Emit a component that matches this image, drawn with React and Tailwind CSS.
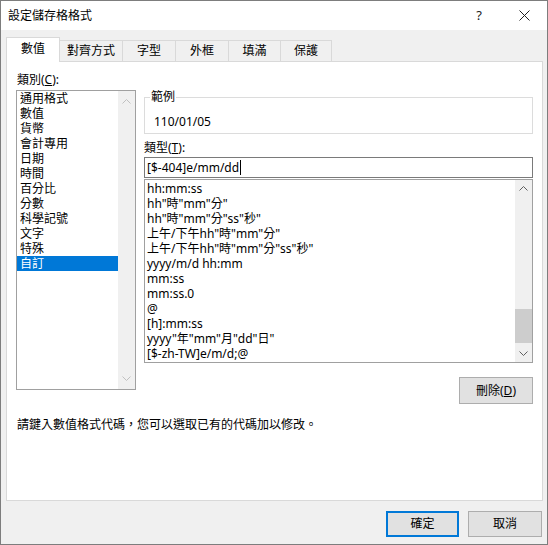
import React from "react";

const leftItems = ["通用格式","數值","貨幣","會計專用","日期","時間","百分比","分數","科學記號","文字","特殊","自訂"];
const rightItems = [
  'hh:mm:ss',
  'hh"時"mm"分"',
  'hh"時"mm"分"ss"秒"',
  '上午/下午hh"時"mm"分"',
  '上午/下午hh"時"mm"分"ss"秒"',
  'yyyy/m/d hh:mm',
  'mm:ss',
  'mm:ss.0',
  '@',
  '[h]:mm:ss',
  'yyyy"年"mm"月"dd"日"',
  '[$-zh-TW]e/m/d;@',
];

function ChevUp({ color }) {
  return (
    <svg width="9" height="5" viewBox="0 0 9 5">
      <polyline points="0.5,4.5 4.5,0.5 8.5,4.5" fill="none" stroke={color} strokeWidth="1" />
    </svg>
  );
}
function ChevDown({ color }) {
  return (
    <svg width="9" height="5" viewBox="0 0 9 5">
      <polyline points="0.5,0.5 4.5,4.5 8.5,0.5" fill="none" stroke={color} strokeWidth="1" />
    </svg>
  );
}

const tabs = [
  { t: "對齊方式", w: "w-[64px]" },
  { t: "字型", w: "w-[54px]" },
  { t: "外框", w: "w-[54px]" },
  { t: "填滿", w: "w-[53px]" },
  { t: "保護", w: "w-[52px]" },
];

export default function App() {
  return (
    <div className="w-[548px] h-[545px] border border-[#7d7d7d] bg-[#f0f0f0] flex flex-col text-[12px] text-black font-['Noto_Sans','Noto_Sans_CJK_TC',sans-serif] overflow-hidden">
      {/* Title bar */}
      <div className="h-[29px] bg-white flex items-center shrink-0">
        <div className="pl-[7px] leading-[16px]">設定儲存格格式</div>
        <div className="ml-auto w-[44px] h-full flex items-center justify-center text-[13px] text-[#222]">?</div>
        <div className="w-[46px] h-full flex items-center justify-center">
          <svg width="11" height="11" viewBox="0 0 11 11">
            <path d="M0.5 0.5 L10.5 10.5 M10.5 0.5 L0.5 10.5" stroke="#222" strokeWidth="1" fill="none" />
          </svg>
        </div>
      </div>

      {/* Tabs */}
      <div className="h-[31px] flex items-end pl-[5px] shrink-0">
        <div className="relative z-10 -mb-px h-[25px] w-[54px] bg-white border-l border-t border-r border-[#d9d9d9] flex items-center justify-center leading-[16px] pb-[2px]">
          數值
        </div>
        {tabs.map((tb) => (
          <div
            key={tb.t}
            className={`-ml-px h-[21px] ${tb.w} border-l border-t border-r border-[#d9d9d9] bg-[#f0f0f0] flex items-center justify-center leading-[16px]`}
          >
            {tb.t}
          </div>
        ))}
      </div>

      {/* Panel */}
      <div className="ml-[5px] w-[537px] h-[440px] border border-[#d9d9d9] bg-white pl-[9px] pt-[10px] shrink-0">
        <div className="flex">
          {/* Left column */}
          <div className="w-[120px] flex flex-col">
            <div className="h-[16px] leading-[16px] pl-[1px]">
              類別(<span className="underline">C</span>):
            </div>
            <div className="mt-[2px] h-[300px] border border-[#a0a0a0] flex">
              <div className="flex-1 flex flex-col pt-0">
                {leftItems.map((it) => (
                  <div
                    key={it}
                    className={`h-[15px] leading-[15px] pl-[3px] ${it === "自訂" ? "bg-[#0078d7] text-white" : ""}`}
                  >
                    {it}
                  </div>
                ))}
              </div>
              <div className="w-[17px] bg-[#f0f0f0] flex flex-col justify-between items-center py-[8px]">
                <ChevUp color="#c0c0c0" />
                <ChevDown color="#c0c0c0" />
              </div>
            </div>
          </div>

          {/* Right column */}
          <div className="ml-[8px] w-[389px] flex flex-col">
            <div className="relative mt-[25px] h-[37px] border border-[#dcdcdc] pl-[9px] pt-[16px]">
              <div className="absolute -top-[9px] left-[5px] bg-white px-[1px] leading-[16px]">範例</div>
              <div className="leading-[15px]">110/01/05</div>
            </div>
            <div className="mt-[6px] h-[16px] leading-[16px]">
              類型(<span className="underline">T</span>):
            </div>
            <div className="mt-[1px] h-[21px] border border-[#7a7a7a] flex items-center pl-[2px]">
              <span className="leading-[15px]">[$-404]e/mm/dd</span>
              <span className="ml-[1px] w-px h-[15px] bg-black"></span>
            </div>
            <div className="mt-px h-[184px] border border-[#a0a0a0] flex">
              <div className="flex-1 pt-[1px] pl-[2px] overflow-hidden">
                {rightItems.map((it) => (
                  <div key={it} className="h-[15px] leading-[15px] whitespace-nowrap">
                    {it}
                  </div>
                ))}
              </div>
              <div className="w-[17px] bg-[#f0f0f0] flex flex-col">
                <div className="h-[17px] flex items-center justify-center">
                  <ChevUp color="#606060" />
                </div>
                <div className="flex-1 flex flex-col">
                  <div className="h-[112px]"></div>
                  <div className="h-[34px] bg-[#cdcdcd]"></div>
                </div>
                <div className="h-[17px] flex items-center justify-center">
                  <ChevDown color="#606060" />
                </div>
              </div>
            </div>
            <div className="mt-[14px] flex justify-end">
              <div className="w-[74px] h-[27px] bg-[#e1e1e1] border border-[#adadad] flex items-center justify-center leading-[16px]">
                刪除(<span className="underline">D</span>)
              </div>
            </div>
          </div>
        </div>
        <div className="mt-[13px] h-[16px] leading-[16px] pl-[1px]">
          請鍵入數值格式代碼，您可以選取已有的代碼加以修改。
        </div>
      </div>

      {/* Bottom buttons */}
      <div className="mt-[10px] flex justify-end gap-[9px] pr-[5px]">
        <div className="w-[73px] h-[26px] bg-[#e1e1e1] border-2 border-[#0078d7] flex items-center justify-center leading-[16px]">
          確定
        </div>
        <div className="w-[74px] h-[26px] bg-[#e1e1e1] border border-[#adadad] flex items-center justify-center leading-[16px]">
          取消
        </div>
      </div>
    </div>
  );
}
